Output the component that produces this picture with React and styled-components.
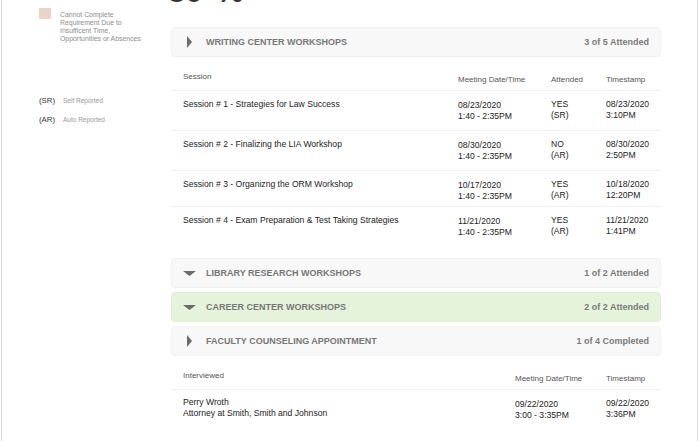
import styled, { createGlobalStyle } from "styled-components";

const GlobalStyle = createGlobalStyle`
  html, body {
    margin: 0;
    padding: 0;
    background: #fff;
    overflow: hidden;
  }
  body {
    font-family: "Liberation Sans", Arial, sans-serif;
    color: #222;
  }
`;

const sessions = [
  { title: "Session # 1 - Strategies for Law Success", date: "08/23/2020", time: "1:40 - 2:35PM", att: "YES", how: "(SR)", ts: ["08/23/2020", "3:10PM"], h: 40 },
  { title: "Session # 2 - Finalizing the LIA Workshop", date: "08/30/2020", time: "1:40 - 2:35PM", att: "NO", how: "(AR)", ts: ["08/30/2020", "2:50PM"], h: 40 },
  { title: "Session # 3 - Organizng the ORM Workshop", date: "10/17/2020", time: "1:40 - 2:35PM", att: "YES", how: "(AR)", ts: ["10/18/2020", "12:20PM"], h: 36 },
  { title: "Session # 4 - Exam Preparation & Test Taking Strategies", date: "11/21/2020", time: "1:40 - 2:35PM", att: "YES", how: "(AR)", ts: ["11/21/2020", "1:41PM"], h: 39, last: true },
];

const Arrow = ({ open }) =>
  open ? (
    <svg width="13" height="5" viewBox="0 0 13 5">
      <path d="M0 0 L13 0 L6.5 5 Z" fill="#6b6b6b" />
    </svg>
  ) : (
    <svg width="5" height="12" viewBox="0 0 5 12">
      <path d="M0 0 L5 6 L0 12 Z" fill="#6b6b6b" />
    </svg>
  );

const App = () => {
  return (
    <>
      <GlobalStyle />
      <Frame>
        <Sidebar>
          <LegendItem>
            <Swatch />
            <LegendText>
              Cannot Complete<br />
              Requirement Due to<br />
              Insufficent Time,<br />
              Opportunities or Absences
            </LegendText>
          </LegendItem>
          <KeyList>
            <KeyRow>
              <Abbr>(SR)</Abbr>
              <KeyLabel>Self Reported</KeyLabel>
            </KeyRow>
            <KeyRow>
              <Abbr>(AR)</Abbr>
              <KeyLabel>Auto Reported</KeyLabel>
            </KeyRow>
          </KeyList>
        </Sidebar>

        <Main>
          <BigStat>80 %</BigStat>

          <SectionHeader>
            <ArrowBox><Arrow /></ArrowBox>
            <SectionTitle>Writing Center Workshops</SectionTitle>
            <SectionCount>3 of 5 Attended</SectionCount>
          </SectionHeader>

          <Table>
            <HeadRow $cols="275px 93px 55px 1fr">
              <HeadCell>Session</HeadCell>
              <HeadCell $low>Meeting Date/Time</HeadCell>
              <HeadCell $low>Attended</HeadCell>
              <HeadCell $low>Timestamp</HeadCell>
            </HeadRow>
            {sessions.map((s) => (
              <BodyRow key={s.title} $cols="275px 93px 55px 1fr" $h={s.h} $last={s.last}>
                <Cell>{s.title}</Cell>
                <Cell $drop={1}>{s.date}<br />{s.time}</Cell>
                <Cell>{s.att}<br />{s.how}</Cell>
                <Cell>{s.ts[0]}<br />{s.ts[1]}</Cell>
              </BodyRow>
            ))}
          </Table>

          <SectionHeader $gap={12}>
            <ArrowBox $open><Arrow open /></ArrowBox>
            <SectionTitle>Library Research Workshops</SectionTitle>
            <SectionCount>1 of 2 Attended</SectionCount>
          </SectionHeader>

          <SectionHeader $gap={4} $done>
            <ArrowBox $open><Arrow open /></ArrowBox>
            <SectionTitle>Career Center Workshops</SectionTitle>
            <SectionCount>2 of 2 Attended</SectionCount>
          </SectionHeader>

          <SectionHeader $gap={4}>
            <ArrowBox><Arrow /></ArrowBox>
            <SectionTitle>Faculty Counseling Appointment</SectionTitle>
            <SectionCount>1 of 4 Completed</SectionCount>
          </SectionHeader>

          <Table>
            <HeadRow $cols="332px 91px 1fr">
              <HeadCell>Interviewed</HeadCell>
              <HeadCell $low>Meeting Date/Time</HeadCell>
              <HeadCell $low>Timestamp</HeadCell>
            </HeadRow>
            <BodyRow $cols="332px 91px 1fr" $h={40} $pad={7} $last>
              <Cell>Perry Wroth<br />Attorney at Smith, Smith and Johnson</Cell>
              <Cell $drop={2}>09/22/2020<br />3:00 - 3:35PM</Cell>
              <Cell $drop={1}>09/22/2020<br />3:36PM</Cell>
            </BodyRow>
          </Table>
        </Main>
      </Frame>
    </>
  );
};

const Frame = styled.div`
  width: 695px;
  height: 441px;
  margin-left: 1px;
  border-left: 1px solid #dcdcdc;
  border-right: 1px solid #dcdcdc;
  display: grid;
  grid-template-columns: 169px 490px;
  overflow: hidden;
`;

const Sidebar = styled.aside`
  padding: 8px 0 0 37px;
  display: flex;
  flex-direction: column;
`;

const LegendItem = styled.div`
  display: flex;
  gap: 9px;
`;

const Swatch = styled.div`
  width: 12px;
  height: 11px;
  background: #ecd3c7;
  flex: none;
`;

const LegendText = styled.div`
  font-size: 6.9px;
  line-height: 8px;
  color: #8d8d8d;
  padding-top: 3px;
`;

const KeyList = styled.div`
  margin-top: 52px;
  display: flex;
  flex-direction: column;
  gap: 8px;
`;

const KeyRow = styled.div`
  display: flex;
  align-items: center;
  height: 11px;
`;

const Abbr = styled.span`
  font-size: 7.8px;
  color: #333;
  width: 24px;
`;

const KeyLabel = styled.span`
  font-size: 6.5px;
  color: #999;
`;

const Main = styled.main`
  display: flex;
  flex-direction: column;
`;

const BigStat = styled.div`
  font-size: 31px;
  line-height: 31px;
  height: 31px;
  font-weight: 700;
  color: #333;
  word-spacing: 5px;
  margin: -24px 0 0 -3px;
`;

const SectionHeader = styled.div`
  height: 30px;
  margin-top: ${(p) => (p.$gap != null ? p.$gap : 20)}px;
  background: ${(p) => (p.$done ? "#e5f3da" : "#f8f8f8")};
  border: 1px solid ${(p) => (p.$done ? "#e0efd4" : "#f1f1f1")};
  border-radius: 4px;
  box-sizing: border-box;
  display: flex;
  align-items: center;
  padding: 0 11px 0 11px;
`;

const ArrowBox = styled.div`
  width: 23px;
  flex: none;
  display: flex;
  align-items: center;
  padding-left: ${(p) => (p.$open ? 0 : 4)}px;
  box-sizing: border-box;
`;

const SectionTitle = styled.div`
  flex: 1;
  font-size: 9px;
  font-weight: 700;
  color: #777;
  text-transform: uppercase;
`;

const SectionCount = styled.div`
  font-size: 9px;
  font-weight: 700;
  color: #7a7a7a;
`;

const Table = styled.div`
  display: flex;
  flex-direction: column;
`;

const HeadRow = styled.div`
  display: grid;
  grid-template-columns: ${(p) => p.$cols};
  padding: 15px 0 0 12px;
  height: 34px;
  box-sizing: border-box;
  border-bottom: 1px solid #f1f1f1;
`;

const HeadCell = styled.div`
  font-size: 8px;
  color: #555;
  padding-top: ${(p) => (p.$low ? 3 : 0)}px;
`;

const BodyRow = styled.div`
  display: grid;
  grid-template-columns: ${(p) => p.$cols};
  padding: ${(p) => p.$pad ?? 8}px 0 0 12px;
  height: ${(p) => p.$h}px;
  box-sizing: border-box;
  border-bottom: 1px solid ${(p) => (p.$last ? "transparent" : "#f1f1f1")};
`;

const Cell = styled.div`
  font-size: 8.6px;
  line-height: 11px;
  color: #222;
  padding-top: ${(p) => p.$drop ?? 0}px;
`;

export default App;
